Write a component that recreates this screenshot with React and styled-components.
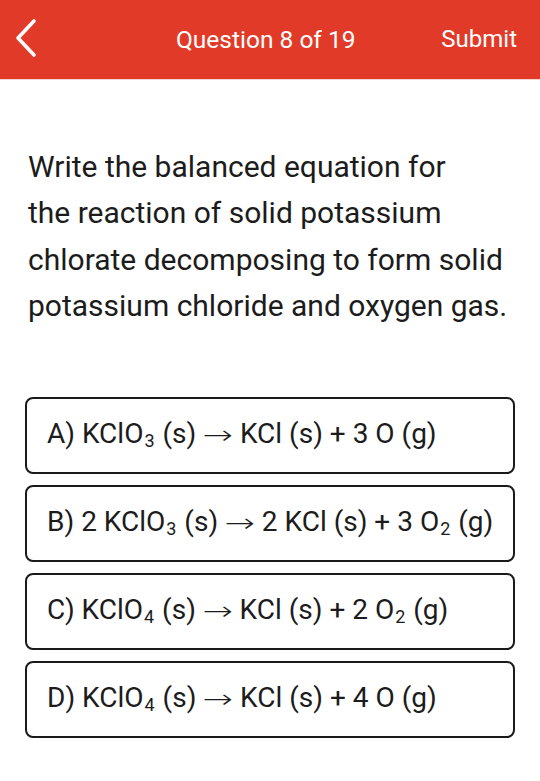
import React from 'react';
import styled, { createGlobalStyle } from 'styled-components';

const GlobalStyle = createGlobalStyle`
	body {
		margin: 0;
		background: #ffffff;
		font-family: Roboto, 'Noto Sans', sans-serif;
		color: #1f1f1f;
	}
`;

const options = [
	{ id: 'A', parts: ['KClO', ['3'], ' (s) ', '→', ' KCl (s) + 3 O (g)'] },
	{ id: 'B', parts: ['2 KClO', ['3'], ' (s) ', '→', ' 2 KCl (s) + 3 O', ['2'], ' (g)'] },
	{ id: 'C', parts: ['KClO', ['4'], ' (s) ', '→', ' KCl (s) + 2 O', ['2'], ' (g)'] },
	{ id: 'D', parts: ['KClO', ['4'], ' (s) ', '→', ' KCl (s) + 4 O (g)'] },
];

const App = () => {
	return (
		<StyledPage>
			<GlobalStyle />
			<StyledHeader>
				<StyledBack aria-label='back'>
					<svg width='28' height='40' viewBox='0 0 28 40' fill='none'>
						<path d='M22 3 L6 20 L22 37' stroke='#fff' strokeWidth='3.6' strokeLinecap='round' strokeLinejoin='round' />
					</svg>
				</StyledBack>
				<StyledTitle>Question 8 of 19</StyledTitle>
				<StyledSubmit>Submit</StyledSubmit>
			</StyledHeader>
			<StyledQuestion>
				Write the balanced equation for
				<br />
				the reaction of solid potassium
				<br />
				chlorate decomposing to form solid
				<br />
				potassium chloride and oxygen gas.
			</StyledQuestion>
			<StyledOptions>
				{options.map((opt) => (
					<StyledOption key={opt.id}>
						{opt.id}){' '}
						{opt.parts.map((p, i) =>
							Array.isArray(p) ? (
								<StyledSub key={i}>{p[0]}</StyledSub>
							) : p === '→' ? (
								<StyledArrow key={i}>{p}</StyledArrow>
							) : (
								<span key={i}>{p}</span>
							)
						)}
					</StyledOption>
				))}
			</StyledOptions>
		</StyledPage>
	);
};

export default App;

const StyledPage = styled.div`
	width: 540px;
	min-height: 781px;
	background: #fff;
`;

const StyledHeader = styled.header`
	display: flex;
	align-items: center;
	height: 80px;
	background-color: #e23a28;
	color: #fff;
	padding: 0 23px 0 12px;
	box-sizing: border-box;
	border-bottom: 1px solid #f3d6d1;
`;

const StyledBack = styled.button`
	display: flex;
	align-items: center;
	border: none;
	background: none;
	padding: 0;
	margin-top: -3px;
	cursor: pointer;
`;

const StyledTitle = styled.h1`
	flex: 1;
	margin: 0 0 0 136px;
	font-size: 24.5px;
	font-weight: 400;
	margin-top: -1px;
`;

const StyledSubmit = styled.button`
	border: none;
	background: none;
	color: #fff;
	font-family: inherit;
	font-size: 24px;
	padding: 0;
	margin-top: -1px;
	cursor: pointer;
`;

const StyledQuestion = styled.p`
	margin: 0;
	padding: 64px 0 0 28px;
	font-size: 30px;
	line-height: 46.3px;
	color: #1c1c1c;
`;

const StyledOptions = styled.div`
	display: flex;
	flex-direction: column;
	gap: 11px;
	padding: 68px 25px 0 25px;
`;

const StyledOption = styled.div`
	display: flex;
	align-items: center;
	height: 77px;
	box-sizing: border-box;
	border: 2px solid #1a1a1a;
	border-radius: 8px;
	padding: 0 0 4px 20px;
	font-size: 28px;
	color: #1c1c1c;
	white-space: pre;
`;

const StyledSub = styled.span`
	display: inline-block;
	font-size: 18px;
	transform: translateY(7px);
	margin: 0 1px 0 1px;
`;

const StyledArrow = styled.span`
	display: inline-block;
	font-family: 'Noto Sans', 'DejaVu Sans', sans-serif;
	font-size: 26px;
	font-weight: 300;
	transform: scaleX(1.4);
	margin: 0 4px;
`;
